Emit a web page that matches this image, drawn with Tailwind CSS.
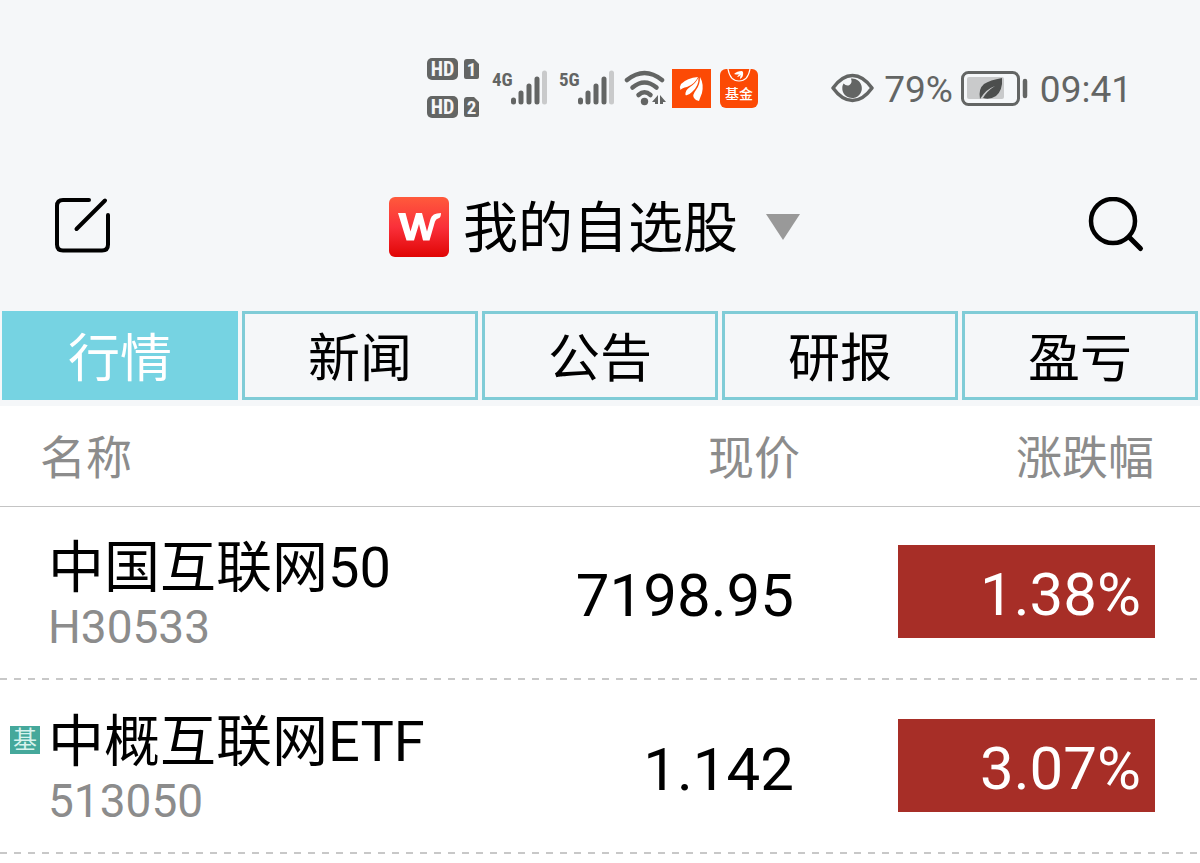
<!DOCTYPE html>
<html lang="zh-CN">
<head>
    <meta charset="UTF-8">
    <meta name="viewport" content="width=device-width, initial-scale=1.0">
    <title>我的自选股</title>
    <script src="https://cdn.jsdelivr.net/npm/@tailwindcss/browser@4"></script>
</head>
<body class="bg-white text-black font-['Roboto','Noto_Sans_CJK_SC',sans-serif]">
    <header class="bg-[#f5f7f9]">
        <!-- Status bar -->
        <div class="flex items-center justify-end pt-[58px] pr-[68px] text-[#636564]">
            <div class="flex items-center">
                <div class="flex flex-col gap-4">
                    <svg class="w-[53px] h-[22px]" viewBox="0 0 53 22" role="img">
                        <rect width="31" height="22" rx="5" fill="currentColor"/>
                        <text x="15.5" y="18" text-anchor="middle" font-family="Roboto Condensed, Roboto" font-weight="700" font-size="20" fill="#f5f6f8">HD</text>
                        <path d="M40 1h7l5 5v13q0 2-2 2H39q-2 0-2-2V4q0-3 3-3z" fill="currentColor"/>
                        <text x="44.5" y="18" text-anchor="middle" font-family="Roboto Condensed, Roboto" font-weight="700" font-size="19" fill="#f5f6f8">1</text>
                    </svg>
                    <svg class="w-[53px] h-[22px]" viewBox="0 0 53 22" role="img">
                        <rect width="31" height="22" rx="5" fill="currentColor"/>
                        <text x="15.5" y="18" text-anchor="middle" font-family="Roboto Condensed, Roboto" font-weight="700" font-size="20" fill="#f5f6f8">HD</text>
                        <path d="M40 1h7l5 5v13q0 2-2 2H39q-2 0-2-2V4q0-3 3-3z" fill="currentColor"/>
                        <text x="44.5" y="18" text-anchor="middle" font-family="Roboto Condensed, Roboto" font-weight="700" font-size="19" fill="#f5f6f8">2</text>
                    </svg>
                </div>
                <!-- Signal strength -->
                <svg class="w-[56px] h-[38px] ml-3" viewBox="0 0 56 38" role="img">
                    <text x="0" y="17" font-family="Roboto Condensed, Roboto" font-weight="700" font-size="19" fill="currentColor">4G</text>
                    <g stroke-width="5" stroke-linecap="round" stroke="currentColor">
                        <path d="M21.500 31v2M29 24v9M37 17v16M45 10v23"/>
                        <path d="M52.500 4v29" stroke="#c9cacb"/>
                    </g>
                </svg>
                <svg class="w-[56px] h-[38px] ml-[11px]" viewBox="0 0 56 38" role="img">
                    <text x="0" y="17" font-family="Roboto Condensed, Roboto" font-weight="700" font-size="19" fill="currentColor">5G</text>
                    <g stroke-width="5" stroke-linecap="round" stroke="currentColor">
                        <path d="M21.500 31v2M29 24v9M37 17v16M45 10v23"/>
                        <path d="M52.500 4v29" stroke="#c9cacb"/>
                    </g>
                </svg>
                <!-- Wi-Fi -->
                <svg class="w-[43px] h-[38px] ml-[9px]" viewBox="0 0 43 38" role="img">
                    <g fill="none" stroke="currentColor" stroke-width="4.500" stroke-linecap="round">
                        <path d="M3 11Q20.500-3 38 11"/>
                        <path d="M8.500 18.500Q20.500 8.500 32.500 18.500"/>
                        <path d="M14.500 26Q20.500 20.500 26.500 26"/>
                    </g>
                    <circle cx="20.500" cy="32.500" r="3.700" fill="currentColor"/>
                    <path d="M28 33l6-7v9h-3v-2zM36 35v-9l6 7h-3v2z" fill="currentColor"/>
                </svg>
                <!-- Brokerage app -->
                <svg class="w-[39px] h-[39px] ml-[5px]" viewBox="0 0 39 39" role="img">
                    <path fill="#fc4a05" d="M0 0h39v39H0z"/>
                    <g fill="#fff">
                        <path d="M26 8Q15 9 9 15Q7 18 8.500 21Q10 19 15 18Q23 15 26 8z"/>
                        <path d="M26.500 8.500Q24 14 18 18Q13 21 13.500 26Q16 27 20 23Q27 17 26.500 8.500z"/>
                        <path d="M28 8Q28 16 24 21Q20 26 22 29Q24 32 27 32Q28 29 30 24Q32 15 28 8z"/>
                    </g>
                </svg>
                <!-- Fund app -->
                <svg class="w-[38px] h-[39px] ml-[9px]" viewBox="0 0 38 39" role="img">
                    <rect width="38" height="39" rx="6" fill="#fc4a05"/>
                    <path d="M8 0Q10 12 19 12Q28 12 30 0" fill="none" stroke="#fff" stroke-width="1.200"/>
                    <path d="M14 5q3-3 8-3l1 1q1 5-3 7q0-3 1-4q-2 2-4 2q1-2 3-3q-2 1-6 0z" fill="#fff"/>
                    <text x="19" y="30" text-anchor="middle" font-family="Noto Sans CJK SC" font-weight="500" font-size="14" fill="#fff">基金</text>
                </svg>
            </div>
            <div class="flex items-center ml-[73px] text-[37px] leading-[44px]">
                <svg class="w-[43px] h-[30px]" viewBox="0 0 43 30" role="img">
                    <path d="M2 15Q11 2.500 21.500 2.500T41 15Q32 27.500 21.500 27.500T2 15z" fill="none" stroke="currentColor" stroke-width="3.500" stroke-linejoin="round"/>
                    <path d="M20 5.500a9.800 9.800 0 1 1-7.500 5q3 3 6 1.500q3-2 1.500-6.500z" fill="currentColor"/>
                </svg>
                <span class="ml-2.5 mt-1">79%</span>
                <svg class="w-[67px] h-[35px] ml-2" viewBox="0 0 67 35" role="img">
                    <rect x="1.500" y="1.500" width="56" height="32" rx="6" fill="none" stroke="currentColor" stroke-width="3"/>
                    <rect x="6" y="6" width="37" height="22" rx="2" fill="#c9cacb"/>
                    <path d="M19 28Q17 18 23 13Q29 9 41 7Q42 19 35 25Q29 29 22 27Q26 20 34 15Q25 18 19 28z" fill="#4c4e4d"/>
                    <path d="M64 10v15" stroke="currentColor" stroke-width="4.500" stroke-linecap="round"/>
                </svg>
                <span class="ml-3 mt-1">09:41</span>
            </div>
        </div>

        <!-- Title bar -->
        <div class="flex items-center justify-between pt-[78px] pl-[53px] pr-[54px]">
            <button type="button" aria-label="编辑" class="w-[60px] h-[60px]">
                <svg viewBox="0 0 60 60" fill="none" stroke="#000" stroke-width="4" stroke-linecap="round" stroke-linejoin="round">
                    <path d="M36 3H10Q4 3 4 9v38.500q0 6 6 6h39q6 0 6-6V18M52 3.500L23.500 32"/>
                </svg>
            </button>
            <button type="button" class="flex items-center mr-2.5">
                <svg class="w-[60px] h-[60px]" viewBox="0 0 60 60">
                    <defs>
                        <linearGradient id="logo" x1="0" y1="0" x2="0" y2="1">
                            <stop offset="0" stop-color="#ff5a3c"/>
                            <stop offset="0.500" stop-color="#fa303a"/>
                            <stop offset="1" stop-color="#e00505"/>
                        </linearGradient>
                    </defs>
                    <rect width="60" height="60" rx="6" fill="url(#logo)"/>
                    <path d="M9 16h7.500l5 18.500L27 16h6l5 18.500L41.500 22Q43 16 52 16q0 5-3 5.500q-2 .5-3 3L40.500 43.500h-6.500L30 27 25 43.500h-7.500z" fill="#fff"/>
                </svg>
                <h1 class="ml-3.5 pt-0.5 text-[55px] leading-[60px]">我的自选股</h1>
                <svg class="w-[34px] h-[26px] ml-7" viewBox="0 0 34 26"><path d="M0 0h34L17 26z" fill="#999"/></svg>
            </button>
            <button type="button" aria-label="搜索" class="w-[60px] h-[60px]">
                <svg viewBox="0 0 60 60" fill="none" stroke="#000" stroke-width="4.500" stroke-linecap="round">
                    <circle cx="27" cy="24" r="22"/>
                    <path d="M43 40L54.500 51.500" stroke-width="5"/>
                </svg>
            </button>
        </div>

        <nav class="grid grid-cols-5 gap-1 px-0.5 pt-[53px] pb-1.5 text-[52px] leading-[75px]">
            <button type="button" class="border-3 border-[#76d3e2] bg-[#76d3e2] pt-2 text-white">行情</button>
            <button type="button" class="border-3 border-[#80ccd7] pt-2">新闻</button>
            <button type="button" class="border-3 border-[#80ccd7] pt-2">公告</button>
            <button type="button" class="border-3 border-[#80ccd7] pt-2">研报</button>
            <button type="button" class="border-3 border-[#80ccd7] pt-2">盈亏</button>
        </nav>
    </header>

    <table class="w-full table-fixed border-collapse">
        <thead>
            <tr class="h-[100px] border-b border-[#c4c4c4] text-[46px] leading-[60px] text-[#8c8c8c]">
                <th scope="col" class="w-5/12 pl-10 pt-1 text-left font-normal">名称</th>
                <th scope="col" class="w-3/12 pt-1 text-right font-normal">现价</th>
                <th scope="col" class="w-4/12 pr-[46px] pt-1 text-right font-normal">涨跌幅</th>
            </tr>
        </thead>
        <tbody>
            <tr class="h-[174px] bg-[repeating-linear-gradient(90deg,#c8c8c8_0_7px,transparent_7px_14px)] bg-[length:100%_2px] bg-bottom bg-no-repeat">
                <td class="pt-1">
                    <div class="pl-12">
                        <div class="text-[56px] leading-[64px] whitespace-nowrap">中国互联网50</div>
                        <div class="text-[46px] leading-[54px] text-[#8c8c8c]">H30533</div>
                    </div>
                </td>
                <td class="pt-1.5 pr-1.5 text-right text-[60px] leading-[80px]">7198.95</td>
                <td class="pb-1 pl-[98px] pr-[45px]">
                    <div class="bg-[#a72e27] pt-[10px] pb-[3px] pr-3.5 text-right text-[60px] leading-[80px] text-white">1.38%</div>
                </td>
            </tr>
            <tr class="h-[174px] bg-[repeating-linear-gradient(90deg,#c8c8c8_0_7px,transparent_7px_14px)] bg-[length:100%_2px] bg-bottom bg-no-repeat">
                <td class="pt-1">
                    <div class="flex">
                        <div class="w-12 shrink-0 pl-2.5 pt-4">
                            <div class="w-[30px] h-7 bg-[#45a89b] text-center text-[24px] leading-[28px] text-[#d8f3ee]">基</div>
                        </div>
                        <div>
                            <div class="text-[56px] leading-[64px] whitespace-nowrap">中概互联网ETF</div>
                            <div class="text-[46px] leading-[54px] text-[#8c8c8c]">513050</div>
                        </div>
                    </div>
                </td>
                <td class="pt-1.5 pr-1.5 text-right text-[60px] leading-[80px]">1.142</td>
                <td class="pb-1 pl-[98px] pr-[45px]">
                    <div class="bg-[#a72e27] pt-[10px] pb-[3px] pr-3.5 text-right text-[60px] leading-[80px] text-white">3.07%</div>
                </td>
            </tr>
        </tbody>
    </table>
</body>
</html>
